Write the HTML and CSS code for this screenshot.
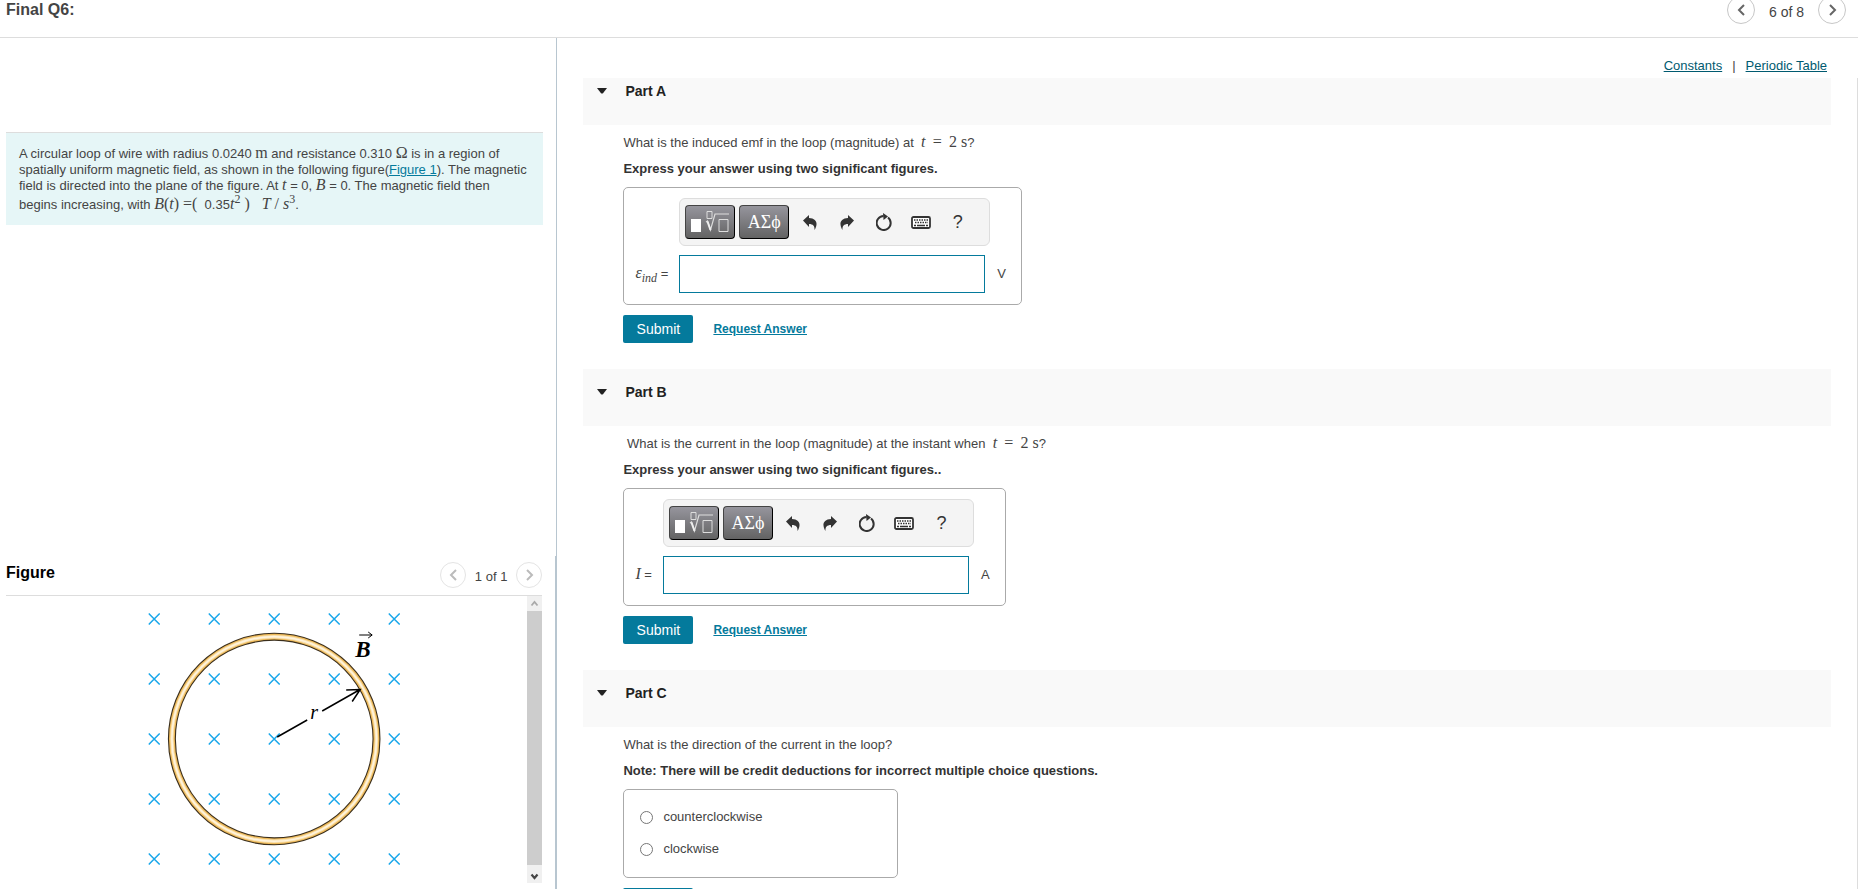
FILE: index.html
```html
<!DOCTYPE html>
<html lang="en">
<head>
  <meta charset="UTF-8">
  <title>Final Q6</title>
  <link rel="stylesheet" href="styles.css">
</head>
<body>

<!-- shared icons -->
<svg class="sprite" aria-hidden="true">
  <symbol id="i-left" viewBox="0 0 12 14"><path d="M9 2L4 7l5 5" fill="none" stroke="currentColor" stroke-width="2"/></symbol>
  <symbol id="i-right" viewBox="0 0 12 14"><path d="M4 2l5 5-5 5" fill="none" stroke="currentColor" stroke-width="2"/></symbol>
  <symbol id="i-caret" viewBox="0 0 10 6"><path d="M0 0h10L6 5.2Q5 6 4 5.2z" fill="currentColor"/></symbol>
  <symbol id="i-root" viewBox="0 0 38 24">
    <path d="M0 9h10v13H0z" fill="#fff"/>
    <path d="M16 1.500h5v7h-5zM28 9.500h9v12h-9z" fill="none" stroke="#ddd"/>
    <path d="M15 12l1.500-1 3 9 4.500-16h14" fill="none" stroke="#ddd" stroke-width="1.200"/>
    <path d="M16.500 11.500l3 8.500" stroke="#eee" stroke-width="2"/>
  </symbol>
  <symbol id="i-undo" viewBox="0 0 14 15"><path d="M0 5.500L6 0v3c5 0 8 3 7.500 6.500-.2 2-.8 3.700-2 5.500.4-4-1.500-6-5.500-6v3z" fill="currentColor"/></symbol>
  <symbol id="i-redo" viewBox="0 0 14 15"><path d="M14 5.500L8 0v3C3 3 0 6 .5 9.500c.2 2 .8 3.700 2 5.500C2.100 11 4 9 8 9v3z" fill="currentColor"/></symbol>
  <symbol id="i-reset" viewBox="0 0 16 18">
    <path d="M12 4.500A7 7 0 1 1 7.500 3" fill="none" stroke="currentColor" stroke-width="2"/>
    <path d="M7 0l5 3.500L7.500 7z" fill="currentColor"/>
  </symbol>
  <symbol id="i-keys" viewBox="0 0 20 13">
    <rect x="1" y="1" width="18" height="11" rx="1.500" fill="#fff" stroke="currentColor" stroke-width="1.800"/>
    <path d="M3 4h14M4 6.500h13" stroke="currentColor" stroke-width="1.500" stroke-dasharray="1.500 1"/>
    <path d="M3 9.500h2M6 9.500h8M15 9.500h2" stroke="currentColor" stroke-width="1.500"/>
  </symbol>
  <symbol id="i-x" viewBox="0 0 12 12"><path d="M.5.5l11 11M11.500.5l-11 11" stroke="#1aa7ea" stroke-width="1.500"/></symbol>
</svg>

<header class="topbar">
  <h1>Final Q6:</h1>
  <nav class="pager">
    <button class="round" aria-label="Previous item"><svg><use href="#i-left"/></svg></button>
    <span>6 of 8</span>
    <button class="round" aria-label="Next item"><svg><use href="#i-right"/></svg></button>
  </nav>
</header>

<main class="panes">
  <section class="left">
    <p class="problem">
      A circular loop of wire with radius 0.0240 <span class="math">m</span> and resistance 0.310 <span class="math">Ω</span> is in a region of spatially uniform magnetic field, as shown in the following figure(<a href="#figure">Figure 1</a>). The magnetic field is directed into the plane of the figure. At <i class="math">t</i> = 0, <i class="math">B</i> = 0. The magnetic field then begins increasing, with <span class="math tall"><i>B</i>(<i>t</i>) =(</span>&nbsp; 0.35<span class="math"><i>t</i><sup>2</sup> )&nbsp; &nbsp;<i>T</i> / <i>s</i><sup>3</sup></span>.
    </p>

    <section class="figure" id="figure">
      <div class="figure-head">
        <h2>Figure</h2>
        <nav class="pager small">
          <button class="round" aria-label="Previous figure" disabled><svg><use href="#i-left"/></svg></button>
          <span>1 of 1</span>
          <button class="round" aria-label="Next figure" disabled><svg><use href="#i-right"/></svg></button>
        </nav>
      </div>
      <div class="figure-body">
        <svg class="drawing" viewBox="0 0 260 260" role="img" aria-label="Wire loop of radius r in a magnetic field B">
          <g id="field"></g>
          <circle cx="130" cy="130" r="102.300" fill="none" stroke="#3a2e1c" stroke-width="8"/>
          <circle cx="130" cy="130" r="102.300" fill="none" stroke="#edb959" stroke-width="5.800"/>
          <circle cx="130" cy="130" r="102.300" fill="none" stroke="#fae2b0" stroke-width="3.400"/>
          <circle cx="130" cy="130" r="102.300" fill="none" stroke="#fff4de" stroke-width="1.500"/>
          <path d="M133 128l30-17M178 102l37-21M202 81l14-.5-8 12" fill="none" stroke="#000" stroke-width="1.500"/>
          <text class="fig-r" x="166" y="110">r</text>
          <text class="fig-b" x="211" y="48">B</text>
          <path d="M215 26h12M224 23l4 3-4 3" fill="none" stroke="#000"/>
        </svg>
        <div class="scrollbar">
          <svg viewBox="0 0 15 15"><path d="M4.500 9.500l3-3.500 3 3.500" fill="none" stroke="#aaa" stroke-width="1.800"/></svg>
          <div class="thumb"></div>
          <svg viewBox="0 0 15 18"><path d="M4.500 9.500l3 3.500 3-3.500" fill="none" stroke="#444" stroke-width="2.200"/></svg>
        </div>
      </div>
    </section>
  </section>

  <section class="right">
    <div class="links"><a href="#">Constants</a><span>|</span><a href="#">Periodic Table</a></div>

    <div class="parts">
      <article class="part first">
        <div class="part-head">
          <button class="toggle" aria-label="Collapse Part A"><svg><use href="#i-caret"/></svg></button>
          <h2>Part A</h2>
        </div>
        <div class="part-body">
          <p>What is the induced emf in the loop (magnitude) at &nbsp;<span class="math"><i>t</i>&thinsp; = &thinsp;2 s</span>?</p>
          <p class="note">Express your answer using two significant figures.</p>
          <div class="answer">
            <div class="toolbar">
              <button class="key" aria-label="Templates"><svg><use href="#i-root"/></svg></button>
              <button class="key">ΑΣϕ</button>
              <button class="tool" aria-label="Undo"><svg class="arrow"><use href="#i-undo"/></svg></button>
              <button class="tool" aria-label="Redo"><svg class="arrow"><use href="#i-redo"/></svg></button>
              <button class="tool" aria-label="Reset"><svg class="reset"><use href="#i-reset"/></svg></button>
              <button class="tool" aria-label="Keyboard shortcuts"><svg class="keys"><use href="#i-keys"/></svg></button>
              <button class="tool">?</button>
            </div>
            <label for="emf"><i class="math">ε<sub>ind</sub></i> =</label>
            <input type="text" id="emf">
            <span class="unit">V</span>
          </div>
          <div class="actions"><button class="submit">Submit</button><a href="#">Request Answer</a></div>
        </div>
      </article>

      <article class="part">
        <div class="part-head">
          <button class="toggle" aria-label="Collapse Part B"><svg><use href="#i-caret"/></svg></button>
          <h2>Part B</h2>
        </div>
        <div class="part-body">
          <p>&nbsp;What is the current in the loop (magnitude) at the instant when &nbsp;<span class="math"><i>t</i>&thinsp; = &thinsp;2 s</span>?</p>
          <p class="note">Express your answer using two significant figures..</p>
          <div class="answer">
            <div class="toolbar">
              <button class="key" aria-label="Templates"><svg><use href="#i-root"/></svg></button>
              <button class="key">ΑΣϕ</button>
              <button class="tool" aria-label="Undo"><svg class="arrow"><use href="#i-undo"/></svg></button>
              <button class="tool" aria-label="Redo"><svg class="arrow"><use href="#i-redo"/></svg></button>
              <button class="tool" aria-label="Reset"><svg class="reset"><use href="#i-reset"/></svg></button>
              <button class="tool" aria-label="Keyboard shortcuts"><svg class="keys"><use href="#i-keys"/></svg></button>
              <button class="tool">?</button>
            </div>
            <label for="current"><i class="math">I</i> =</label>
            <input type="text" id="current">
            <span class="unit">A</span>
          </div>
          <div class="actions"><button class="submit">Submit</button><a href="#">Request Answer</a></div>
        </div>
      </article>

      <article class="part">
        <div class="part-head">
          <button class="toggle" aria-label="Collapse Part C"><svg><use href="#i-caret"/></svg></button>
          <h2>Part C</h2>
        </div>
        <div class="part-body">
          <p>What is the direction of the current in the loop?</p>
          <p class="note">Note: There will be credit deductions for incorrect multiple choice questions.</p>
          <div class="choices">
            <label><input type="radio" name="direction">counterclockwise</label>
            <label><input type="radio" name="direction">clockwise</label>
          </div>
          <div class="actions"><button class="submit" aria-label="Submit"></button></div>
        </div>
      </article>
    </div>
  </section>
</main>

<script src="script.js"></script>
</body>
</html>
```
FILE: styles.css
```css
* {
  box-sizing: border-box;
}

body {
  margin: 0;
  height: 100vh;
  display: flex;
  flex-direction: column;
  overflow: hidden;
  font-family: "Liberation Sans", Arial, sans-serif;
  font-size: 13px;
  line-height: 16px;
  color: #444;
  background: #fff;
}

h1, h2, p {
  margin: 0;
}

button {
  padding: 0;
  border: none;
  background: none;
  font-family: inherit;
  color: inherit;
}

a {
  color: #047a9c;
}

.sprite {
  display: none;
}

/* math text */
.math {
  font-family: "Liberation Serif", "Times New Roman", serif;
  font-size: 16px;
  line-height: 0;
}

.math.tall {
  line-height: 20px;
}

.math sup, .math sub {
  font-size: 12px;
  line-height: 0;
}

/* top bar */
.topbar {
  flex: none;
  display: flex;
  justify-content: space-between;
  align-items: center;
  height: 38px;
  padding: 0 12px 18px 6px;
  border-bottom: 1px solid #ddd;
}

.topbar h1 {
  font-size: 16px;
  line-height: 18px;
}

.pager {
  display: flex;
  align-items: center;
  gap: 14px;
  font-size: 14px;
}

.pager span {
  padding-top: 4px;
}

.round {
  display: flex;
  align-items: center;
  justify-content: center;
  width: 28px;
  height: 28px;
  border: 1px solid #c7c7c7;
  border-radius: 50%;
  color: #666;
}

.round svg {
  width: 12px;
  height: 14px;
}

.small {
  gap: 9px;
  font-size: 13px;
}

.small .round {
  width: 26px;
  height: 26px;
  border-color: #e4e4e4;
  color: #bbb;
}

.panes {
  flex: 1;
  min-height: 0;
  display: flex;
}

/* left pane */
.left {
  flex: 0 0 30%;
  display: flex;
  flex-direction: column;
  justify-content: space-between;
  border-right: 1px solid #b8c6d0;
}

.problem {
  margin: 94px 13px 0 6px;
  padding: 13px 13px 11px;
  border-top: 1px solid #ddd;
  background: #e6f6f7;
}

.figure {
  padding: 6px 13px 6px 6px;
  border-right: 1px solid #b8c6d0;
}

.figure-head {
  display: flex;
  justify-content: space-between;
  align-items: center;
  height: 34px;
  border-bottom: 1px solid #ddd;
  padding-bottom: 8px;
}

.figure-head h2 {
  font-size: 16px;
  padding-bottom: 4px;
  color: #000;
}

.figure-body {
  display: flex;
  height: 287px;
}

.drawing {
  flex: 1;
  min-width: 0;
  height: 260px;
  margin-top: 13px;
  padding-left: 15px;
}

.fig-r, .fig-b {
  font-family: "Liberation Serif", "Times New Roman", serif;
  font-style: italic;
  font-size: 20px;
}

.fig-b {
  font-size: 23px;
  font-weight: bold;
}

.scrollbar {
  display: flex;
  flex-direction: column;
  width: 15px;
  background: #f0f0f0;
}

.thumb {
  flex: 1;
  background: #cdcdcd;
}

/* right pane */
.right {
  flex: 1;
  padding: 20px 0 0 26px;
  overflow: hidden;
}

.links {
  display: flex;
  justify-content: flex-end;
  gap: 10px;
  padding: 0 31px 4px 0;
}

.links a {
  color: #005a70;
}

.parts {
  padding-right: 26px;
  border-right: 1px solid #ddd;
}

.part {
  margin-bottom: 26px;
}

.part-head {
  display: flex;
  gap: 18px;
  height: 57px;
  padding: 15px 14px 0;
  background: #f9f9f9;
  color: #222;
}

.first .part-head {
  height: 47px;
  padding-top: 5px;
}

.part-head h2 {
  font-size: 14px;
}

.toggle {
  height: 16px;
}

.toggle svg {
  display: block;
  width: 10px;
  height: 6px;
}

.part-body {
  padding: 10px 40px 0;
}

.part-body p {
  margin-bottom: 10px;
}

.note {
  font-weight: bold;
  color: #333;
}

.answer {
  display: grid;
  grid-template-columns: auto 306px auto;
  column-gap: 11px;
  row-gap: 9px;
  align-items: center;
  width: max-content;
  padding: 10px 15px 11px 11px;
  border: 1px solid #aaa;
  border-radius: 5px;
}

.toolbar {
  grid-column: 2 / 4;
  display: flex;
  align-items: center;
  width: 311px;
  height: 48px;
  padding-left: 5px;
  border: 1px solid #ddd;
  border-radius: 6px;
  background: #f4f4f4;
}

.key {
  display: flex;
  align-items: center;
  justify-content: center;
  width: 50px;
  height: 34px;
  margin-right: 4px;
  border: 1px solid #000;
  border-top-color: #444;
  border-left-color: #444;
  border-radius: 4px;
  background: linear-gradient(#96959d, #636363);
  color: #fff;
  font-family: "Liberation Serif", "Times New Roman", serif;
  font-size: 18px;
}

.key + .key {
  margin-right: 2px;
}

.key svg {
  flex: none;
  width: 38px;
  height: 24px;
}

.tool {
  display: flex;
  align-items: center;
  justify-content: center;
  width: 37px;
  height: 34px;
  font-size: 18px;
  color: #333;
}

.arrow {
  width: 14px;
  height: 15px;
}

.reset {
  width: 16px;
  height: 18px;
}

.keys {
  width: 20px;
  height: 13px;
}

.answer input {
  width: 306px;
  height: 38px;
  padding: 0 8px;
  border: 1px solid #047a9c;
}

.unit {
  padding-left: 1px;
}

.actions {
  display: flex;
  align-items: center;
  gap: 20px;
  margin-top: 10px;
}

.actions a {
  font-weight: bold;
  font-size: 12px;
}

.submit {
  width: 70px;
  height: 28px;
  border-radius: 2px;
  background: #047a9c;
  color: #fff;
  font-size: 14px;
}

.choices {
  display: flex;
  flex-direction: column;
  gap: 16px;
  width: 275px;
  padding: 19px 16px 20px;
  border: 1px solid #aaa;
  border-radius: 5px;
}

.choices label {
  display: flex;
  align-items: center;
  gap: 10px;
}

.choices input {
  width: 13px;
  height: 13px;
  margin: 0;
}
```
FILE: script.js
```js
// field crosses, 5 x 5
const field = document.getElementById("field");
for (let row = 0; row < 5; row++) {
  for (let col = 0; col < 5; col++) {
    const use = document.createElementNS("http://www.w3.org/2000/svg", "use");
    use.setAttribute("href", "#i-x");
    use.setAttribute("x", 4 + col * 60);
    use.setAttribute("y", 4 + row * 60);
    use.setAttribute("width", 12);
    use.setAttribute("height", 12);
    field.appendChild(use);
  }
}
```
